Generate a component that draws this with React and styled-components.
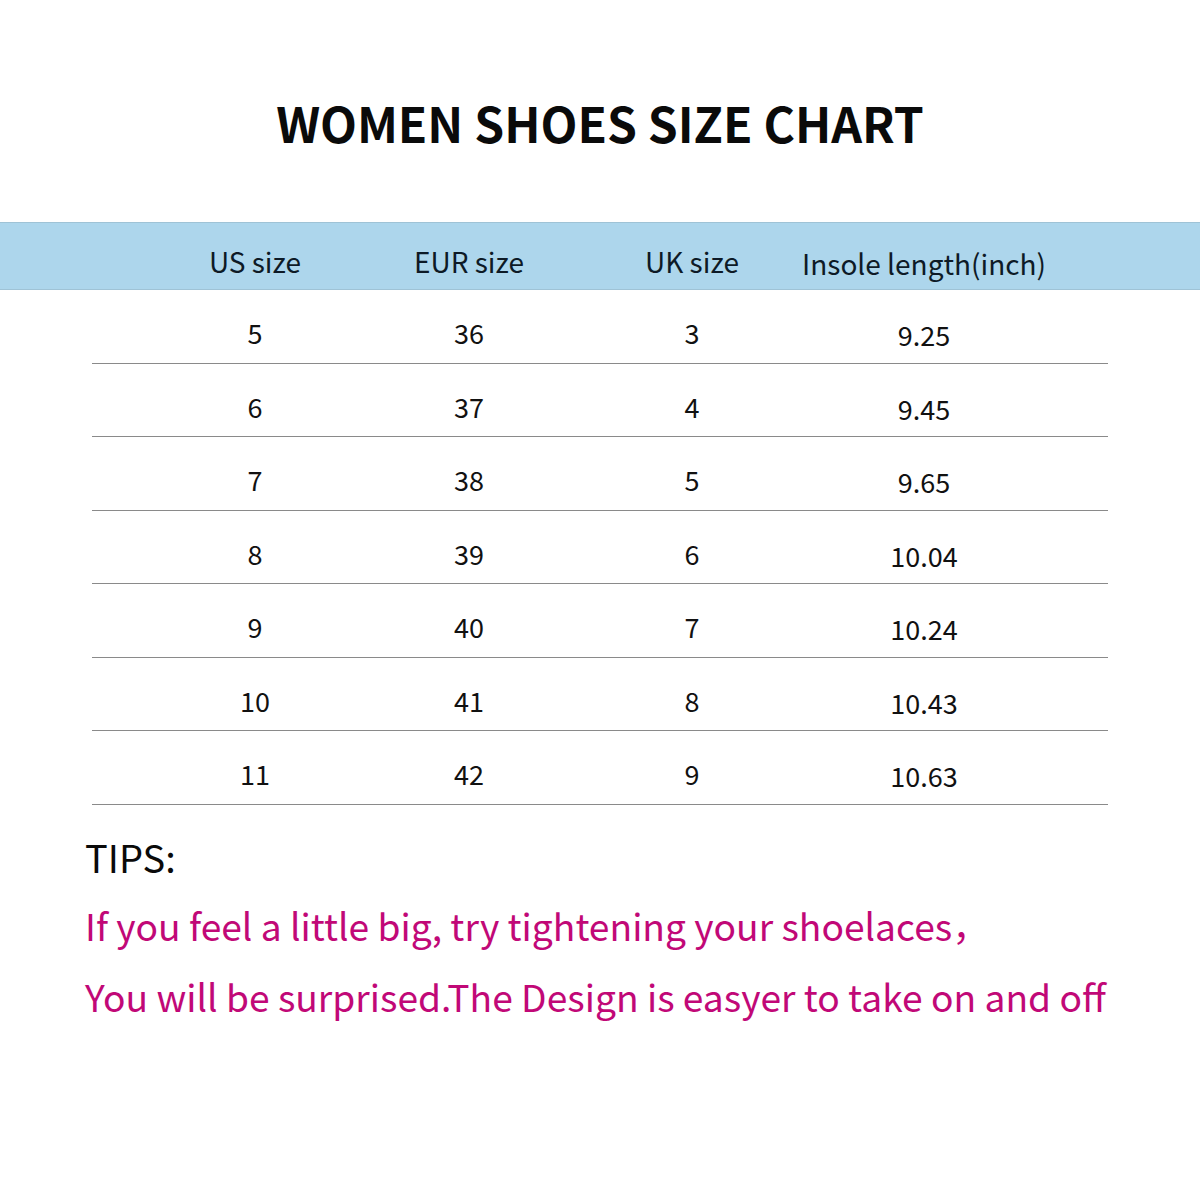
import React from 'react';
import styled, { createGlobalStyle } from 'styled-components';

const GlobalStyle = createGlobalStyle`
  html, body {
    margin: 0;
    padding: 0;
    background: #fff;
  }
  body {
    font-family: "Noto Sans CJK SC", "Noto Sans", sans-serif;
    color: #111;
  }
`;

const Page = styled.div`
  width: 1200px;
  height: 1200px;
  background: #fff;
  display: flex;
  flex-direction: column;
`;

const Title = styled.h1`
  margin: 0;
  padding-top: 87px;
  height: 222px;
  flex-shrink: 0;
  box-sizing: border-box;
  text-align: center;
  font-size: 48px;
  line-height: 70px;
  font-weight: 700;
  color: #0a0a0a;
`;

const HeaderBand = styled.div`
  height: 68px;
  flex-shrink: 0;
  background: #add6ec;
  border-top: 1px solid #9fc3d6;
  border-bottom: 1px solid #9fc3d6;
  box-sizing: border-box;
`;

const Columns = styled.div`
  width: 1016px;
  margin: 0 auto;
  height: 100%;
  box-sizing: border-box;
  padding-left: 56px;
  display: grid;
  grid-template-columns: 214px 214px 232px 232px;
  align-items: center;
`;

const Cell = styled.div`
  justify-self: center;
  white-space: nowrap;
  font-size: ${({ head }) => (head ? '28px' : '27px')};
  padding-top: ${({ head, low }) => (head ? (low ? '14px' : '10px') : low ? '17px' : '13px')};
  color: ${({ head }) => (head ? '#0d1a26' : '#111')};
`;

const Body = styled.div`
  width: 1016px;
  margin: 0 auto;
`;

const Row = styled.div`
  height: 73.5px;
  border-bottom: 1px solid #8a8a8a;
  box-sizing: border-box;
`;

const Tips = styled.div`
  padding: 19px 0 0 85px;
  display: flex;
  flex-direction: column;
`;

const TipsLabel = styled.div`
  font-size: 38px;
  line-height: 66px;
  color: #0a0a0a;
`;

const TipLine = styled.div`
  font-size: 37.2px;
  line-height: 71px;
  color: #c10877;
  white-space: nowrap;
`;

const rows = [
  ['5', '36', '3', '9.25'],
  ['6', '37', '4', '9.45'],
  ['7', '38', '5', '9.65'],
  ['8', '39', '6', '10.04'],
  ['9', '40', '7', '10.24'],
  ['10', '41', '8', '10.43'],
  ['11', '42', '9', '10.63'],
];

export default function App() {
  return (
    <Page>
      <GlobalStyle />
      <Title>WOMEN SHOES SIZE CHART</Title>
      <HeaderBand>
        <Columns>
          <Cell head>US size</Cell>
          <Cell head>EUR size</Cell>
          <Cell head>UK size</Cell>
          <Cell head low>Insole length(inch)</Cell>
        </Columns>
      </HeaderBand>
      <Body>
        {rows.map((r) => (
          <Row key={r[0]}>
            <Columns>
              <Cell>{r[0]}</Cell>
              <Cell>{r[1]}</Cell>
              <Cell>{r[2]}</Cell>
              <Cell low>{r[3]}</Cell>
            </Columns>
          </Row>
        ))}
      </Body>
      <Tips>
        <TipsLabel>TIPS:</TipsLabel>
        <TipLine>If you feel a little big, try tightening your shoelaces，</TipLine>
        <TipLine>You will be surprised.The Design is easyer to take on and off</TipLine>
      </Tips>
    </Page>
  );
}
